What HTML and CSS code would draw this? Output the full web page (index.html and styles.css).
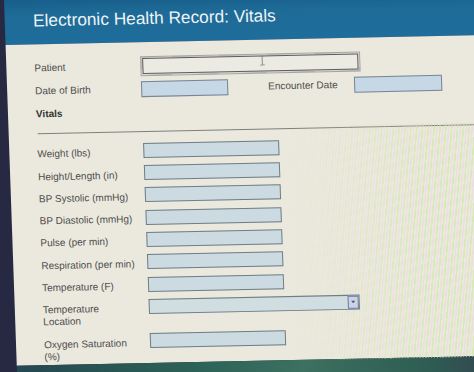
FILE: index.html
```html
<!DOCTYPE html>
<html lang="en">
<head>
<meta charset="utf-8">
<title>Electronic Health Record: Vitals</title>
<link rel="stylesheet" href="styles.css">
</head>
<body>
<div class="screen">
  <header class="titlebar">
    <h1 class="title">Electronic Health Record: Vitals</h1>
  </header>
  <main class="content">
    <div class="row row-patient">
      <label class="lbl">Patient</label>
      <div class="field field-patient">
        <svg class="ibeam" width="6" height="10" viewBox="0 0 6 10"><path d="M0.5 0.5h5M3 0.5v9M0.5 9.5h5" stroke="#8d8d8d" stroke-width="1" fill="none"/></svg>
      </div>
    </div>
    <div class="row row-dates">
      <label class="lbl">Date of Birth</label>
      <div class="field field-date"></div>
      <label class="lbl lbl-enc">Encounter Date</label>
      <div class="field field-date field-enc"></div>
    </div>
    <div class="section">Vitals</div>
    <div class="sep"></div>
    <div class="vitals">
      <div class="vrow"><label class="lbl">Weight (lbs)</label><div class="field field-v"></div></div>
      <div class="vrow"><label class="lbl">Height/Length (in)</label><div class="field field-v"></div></div>
      <div class="vrow"><label class="lbl">BP Systolic (mmHg)</label><div class="field field-v"></div></div>
      <div class="vrow"><label class="lbl">BP Diastolic (mmHg)</label><div class="field field-v"></div></div>
      <div class="vrow"><label class="lbl">Pulse (per min)</label><div class="field field-v"></div></div>
      <div class="vrow"><label class="lbl">Respiration (per min)</label><div class="field field-v"></div></div>
      <div class="vrow"><label class="lbl">Temperature (F)</label><div class="field field-v"></div></div>
      <div class="vrow"><label class="lbl">Temperature Location</label><div class="field field-v field-select"><span class="dd"><svg width="5" height="4" viewBox="0 0 5 4"><path d="M0.5 1h4L2.5 3.5z" fill="#4a5470"/></svg></span></div></div>
      <div class="vrow"><label class="lbl">Oxygen Saturation (%)</label><div class="field field-v"></div></div>
    </div>
  </main>
  <div class="strip"></div>
</div>
</body>
</html>
```

FILE: styles.css
```css
html, body {
  margin: 0;
  padding: 0;
}
body {
  background: #272942;
  overflow: hidden;
  height: 372px;
  font-family: "Liberation Sans", Arial, sans-serif;
}
.screen {
  width: 520px;
  margin-left: 4px;
  transform-origin: 0 0;
  transform: rotate(-1.2deg) skewX(0.8deg);
}
.titlebar {
  height: 44.5px;
  box-sizing: border-box;
  padding-left: 28.3px;
  background: linear-gradient(#185e8a, #1e6b98 35%, #1f6d9a);
}
.title {
  margin: 0;
  padding-top: 11px;
  font-weight: normal;
  font-size: 17.3px;
  line-height: 20px;
  color: #eef4f7;
}
.content {
  background: #ebe9de;
  padding: 14.2px 0 2.8px 28px;
}
.row {
  display: flex;
  align-items: center;
}
.lbl {
  flex: none;
  width: 95.5px;
  margin-right: 10.5px;
  font-size: 10px;
  line-height: 13px;
  color: #4d4d4d;
}
.field {
  flex: none;
  box-sizing: border-box;
}
.field-patient {
  position: relative;
  width: 220px;
  height: 20px;
  background: #ebeae3;
  border: 1px solid #a3a3a0;
  box-shadow: inset 0 0 0 1px #d9d8d1, inset 0 0 0 2px #5e5e5e;
}
.ibeam {
  position: absolute;
  left: 118px;
  top: 1px;
}
.row-dates {
  margin-top: 5.6px;
}
.field-date {
  width: 87px;
  height: 15.3px;
  background: #c6d7e5;
  border: 1px solid #7b8591;
}
.lbl-enc {
  width: auto;
  margin-left: 40px;
  margin-right: 16px;
}
.field-enc {
  width: 88px;
}
.section {
  margin-top: 8.9px;
  font-size: 10px;
  line-height: 13px;
  font-weight: bold;
  color: #333;
}
.sep {
  margin: 12.75px 0 0 1px;
  border-top: 1.5px solid #7e7e7c;
}
.vitals {
  position: relative;
  isolation: isolate;
  margin-top: 10.5px;
  display: flex;
  flex-direction: column;
  gap: 6.8px;
}
.vitals::before {
  content: "";
  position: absolute;
  z-index: -1;
  left: 0;
  right: 0;
  top: -14px;
  bottom: -3px;
  background: repeating-linear-gradient(97deg,
    rgba(196, 236, 150, 0.55) 0 1.6px,
    rgba(255, 255, 255, 0) 1.6px 3px,
    rgba(240, 205, 228, 0.45) 3px 4.4px,
    rgba(255, 255, 255, 0) 4.4px 5.8px);
  -webkit-mask-image: linear-gradient(90deg, transparent 50%, #000 80%);
  mask-image: linear-gradient(90deg, transparent 50%, #000 80%);
}
.vrow {
  display: flex;
  align-items: flex-start;
}
.vrow .lbl {
  padding-top: 3.5px;
  line-height: 12px;
}
.field-v {
  width: 135.5px;
  height: 15px;
  background: #cbdbe1;
  border: 1px solid #727d84;
}
.field-select {
  width: 211px;
  display: flex;
  justify-content: flex-end;
  background: #d0dde1;
}
.dd {
  width: 11px;
  height: 13px;
  box-sizing: border-box;
  display: flex;
  align-items: center;
  justify-content: center;
  background: #cdd3e6;
  border: 1px solid #6c7aa3;
}
.strip {
  height: 40px;
  background: linear-gradient(90deg, #244850, #2d6257 35%, #3c7060 55%, #2e5c52 80%, #3a3350);
}
```
